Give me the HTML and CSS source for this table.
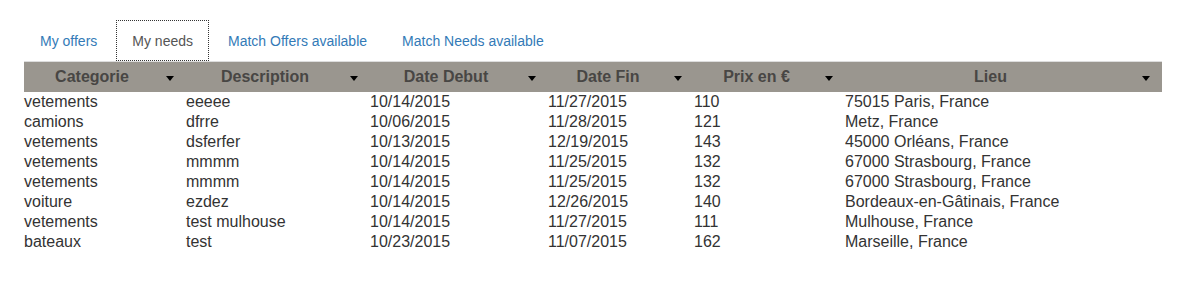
FILE: index.html
```html
<!DOCTYPE html>
<html>
<head>
<meta charset="utf-8">
<link rel="stylesheet" href="styles.css">
</head>
<body>
<div class="page">
  <ul class="tabs">
    <li><a class="tab">My offers</a></li>
    <li><a class="tab active">My needs</a></li>
    <li><a class="tab">Match Offers available</a></li>
    <li><a class="tab">Match Needs available</a></li>
  </ul>
  <table class="grid">
    <colgroup>
      <col class="c1"><col class="c2"><col class="c3"><col class="c4"><col class="c5"><col class="c6">
    </colgroup>
    <thead>
      <tr>
        <th>Categorie<span class="caret"></span></th>
        <th>Description<span class="caret"></span></th>
        <th>Date Debut<span class="caret"></span></th>
        <th>Date Fin<span class="caret"></span></th>
        <th>Prix en €<span class="caret"></span></th>
        <th>Lieu<span class="caret"></span></th>
      </tr>
    </thead>
    <tbody>
      <tr><td>vetements</td><td>eeeee</td><td>10/14/2015</td><td>11/27/2015</td><td>110</td><td>75015 Paris, France</td></tr>
      <tr><td>camions</td><td>dfrre</td><td>10/06/2015</td><td>11/28/2015</td><td>121</td><td>Metz, France</td></tr>
      <tr><td>vetements</td><td>dsferfer</td><td>10/13/2015</td><td>12/19/2015</td><td>143</td><td>45000 Orléans, France</td></tr>
      <tr><td>vetements</td><td>mmmm</td><td>10/14/2015</td><td>11/25/2015</td><td>132</td><td>67000 Strasbourg, France</td></tr>
      <tr><td>vetements</td><td>mmmm</td><td>10/14/2015</td><td>11/25/2015</td><td>132</td><td>67000 Strasbourg, France</td></tr>
      <tr><td>voiture</td><td>ezdez</td><td>10/14/2015</td><td>12/26/2015</td><td>140</td><td>Bordeaux-en-Gâtinais, France</td></tr>
      <tr><td>vetements</td><td>test mulhouse</td><td>10/14/2015</td><td>11/27/2015</td><td>111</td><td>Mulhouse, France</td></tr>
      <tr><td>bateaux</td><td>test</td><td>10/23/2015</td><td>11/07/2015</td><td>162</td><td>Marseille, France</td></tr>
    </tbody>
  </table>
</div>
</body>
</html>
```

FILE: styles.css
```css
html, body {
  margin: 0;
  padding: 0;
  background: #fff;
}

body {
  font-family: "Liberation Sans", Arial, sans-serif;
  color: #333;
}

.page {
  padding: 20px 0 0 24px;
  width: 1138px;
}

.tabs {
  list-style: none;
  margin: 0;
  padding: 0;
  display: flex;
  border-bottom: 1px solid #ddd;
}

.tabs li {
  margin-right: 3px;
}

.tab {
  display: block;
  padding: 10px 15px 9px;
  border: 1px solid transparent;
  font-size: 14px;
  line-height: 20px;
  color: #337ab7;
  cursor: pointer;
}

.tab.active {
  color: #555;
  border: 1px dotted #333;
}

.grid {
  width: 1138px;
  border-collapse: collapse;
  border-spacing: 0;
  table-layout: fixed;
  font-size: 16px;
}

.c1 { width: 162px; }
.c2 { width: 184px; }
.c3 { width: 178px; }
.c4 { width: 146px; }
.c5 { width: 151px; }
.c6 { width: 317px; }

.grid th {
  position: relative;
  height: 30px;
  padding: 0 26px 0 0;
  background: #9a968f;
  color: #484644;
  font-weight: bold;
  text-align: center;
  line-height: 30px;
}

.caret {
  position: absolute;
  right: 12px;
  top: 14px;
  width: 0;
  height: 0;
  border-left: 4px solid transparent;
  border-right: 4px solid transparent;
  border-top: 5px solid #000;
}

.grid td {
  padding: 0;
  line-height: 20px;
  height: 20px;
  white-space: nowrap;
}
```
